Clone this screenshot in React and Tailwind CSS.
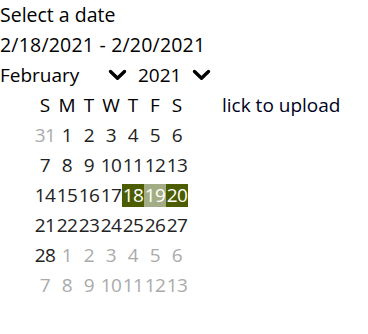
import React from "react";

function Chevron() {
  return (
    <svg width="19" height="12" viewBox="0 0 19 12" className="block">
      <path d="M2.5 2.5 L9.5 9.2 L16.5 2.5" fill="none" stroke="#000" strokeWidth="3.4" strokeLinecap="round" strokeLinejoin="round" />
    </svg>
  );
}

const weeks = [
  [["31", "o"], ["1"], ["2"], ["3"], ["4"], ["5"], ["6"]],
  [["7"], ["8"], ["9"], ["10"], ["11"], ["12"], ["13"]],
  [["14"], ["15"], ["16"], ["17"], ["18", "s"], ["19", "m"], ["20", "s"]],
  [["21"], ["22"], ["23"], ["24"], ["25"], ["26"], ["27"]],
  [["28"], ["1", "o"], ["2", "o"], ["3", "o"], ["4", "o"], ["5", "o"], ["6", "o"]],
  [["7", "o"], ["8", "o"], ["9", "o"], ["10", "o"], ["11", "o"], ["12", "o"], ["13", "o"]],
];

export default function App() {
  return (
    <div className="text-[19px] leading-[30px] text-black bg-white w-[368px] h-[334px] overflow-hidden" style={{ fontFamily: '"Open Sans", sans-serif' }}>
      <div className="text-[19.5px]">Select a date</div>
      <div className="text-[19.5px] tracking-[0.2px]">2/18/2021 - 2/20/2021</div>
      <div className="flex items-center">
        <div className="flex items-center w-[138px]">
          <span className="w-[108px]">February</span>
          <Chevron />
        </div>
        <div className="flex items-center">
          <span className="w-[54px]">2021</span>
          <Chevron />
        </div>
      </div>
      <div className="flex">
        <div className="ml-[34px] grid grid-cols-[repeat(7,22px)] text-center">
          {["S", "M", "T", "W", "T", "F", "S"].map((d, i) => (
            <div key={i} className="h-[30px]">{d}</div>
          ))}
          {weeks.flat().map(([n, t], i) => (
            <div key={i} className="h-[30px] flex items-center justify-center">
              <span
                className={
                  "w-[22px] h-[23px] leading-[23px] tracking-[-0.5px] " +
                  (t === "o"
                    ? "text-[#aaaaaa]"
                    : t === "s"
                    ? "bg-[#4b5d00] text-white"
                    : t === "m"
                    ? "bg-[#a3ad85] text-white"
                    : "text-[#222222]")
                }
              >
                {n}
              </span>
            </div>
          ))}
        </div>
        <div className="ml-[34px] text-[#000022]">lick to upload</div>
      </div>
    </div>
  );
}
